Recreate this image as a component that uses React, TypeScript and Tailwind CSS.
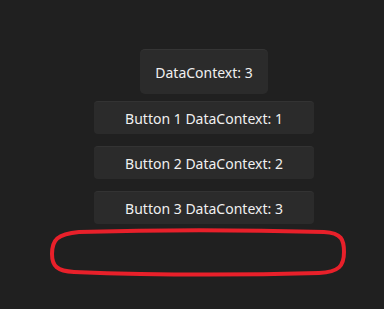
const ITEMS = [1, 2, 3];

export default function App() {
  return (
    <div
      className="min-h-[309px] w-full bg-[#202020] pl-[24px] pt-[49px] text-[14px] text-[#f0f0f0]"
      style={{ fontFamily: '"Noto Sans", "Open Sans", sans-serif' }}
    >
      <div className="flex flex-col items-center">
        <button className="flex h-[45px] w-[128px] items-center justify-center rounded-[5px] border-t border-[#353535] bg-[#2b2b2b]">
          DataContext: 3
        </button>

        <div className="mt-[7px] flex flex-col gap-[12px]">
          {ITEMS.map((n) => (
            <button
              key={n}
              className="flex h-[33px] w-[220px] items-center justify-center rounded-[4px] border-t border-[#333333] bg-[#2b2b2b]"
            >
              Button {n} DataContext: {n}
            </button>
          ))}
        </div>

        {/* red hand-drawn highlight */}
        <svg width="310" height="50" viewBox="0 0 310 50" className="mt-[4px]" fill="none">
          <path
            d="M 30 4 C 100 2, 200 2, 275 4 C 293 5, 295 12, 295 24 C 295 38, 290 44, 270 45 C 200 47, 100 47, 25 44 C 8 43, 3 38, 3 26 C 3 12, 8 6, 30 4 Z"
            stroke="#e8202a"
            strokeWidth="4"
            strokeLinejoin="round"
          />
        </svg>
      </div>
    </div>
  );
}
